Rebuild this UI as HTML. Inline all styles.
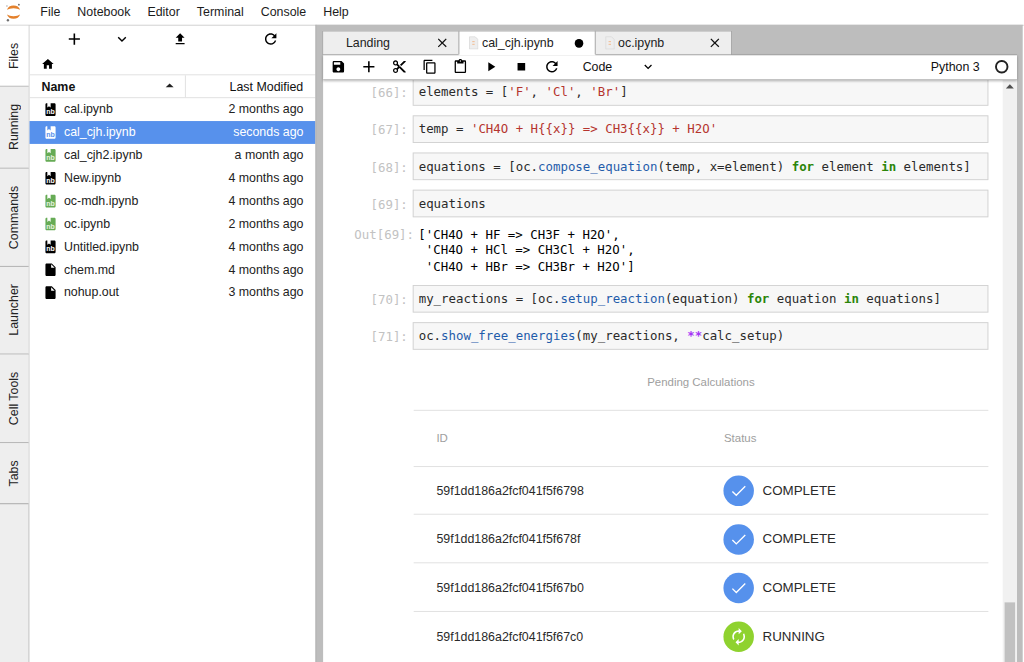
<!DOCTYPE html>
<html>
<head>
<meta charset="utf-8">
<title>JupyterLab</title>
<style>
*{box-sizing:border-box;margin:0;padding:0}
html,body{width:1024px;height:662px;overflow:hidden;background:#fff}
body{font-family:"Liberation Sans",Arial,sans-serif;font-size:13px;color:#000;position:relative}
#app{position:absolute;left:0;top:0;width:1074.4px;height:696px;transform:scale(0.953125);transform-origin:0 0;overflow:hidden;background:#fff}
.abs{position:absolute}
.ic{position:absolute;display:block}
#top{left:0;top:0;width:1075px;height:27px;background:#fff;border-bottom:1px solid #c4c4c4}
#menu{position:absolute;left:33.4px;top:0;height:25px;display:flex}
#menu div{padding:0 8.95px;line-height:26.8px;font-size:13px;color:#1c1c1c;white-space:nowrap}
#side{left:0;top:27px;width:30.7px;height:670px;background:#eee;border-right:1.2px solid #b0b0b0;display:flex;flex-direction:column}
.st{width:29.5px;border-bottom:1px solid #a8a8a8;background:#eee;display:flex;align-items:center;justify-content:center;padding:18px 0;flex:none}
.st.cur{background:#fff}
.st span{writing-mode:vertical-rl;transform:rotate(180deg);font-size:13px;color:#222;white-space:nowrap;line-height:16px}
#fb{left:30.7px;top:27px;width:299.9px;height:670px;background:#fff}
#fbh{position:absolute;left:0;top:51.2px;width:299.9px;height:25px;border-top:1px solid #e0e0e0;border-bottom:1px solid #e0e0e0;line-height:23px;color:#111}
#fbh b{position:absolute;left:12.9px;top:0}
#fbh .lm{position:absolute;right:12.4px;top:0}
#fbh .dv{position:absolute;left:162.9px;top:0;width:1px;height:23px;background:#e0e0e0}
.row{position:absolute;left:0;width:299.9px;height:24px;line-height:24px;font-size:13px;color:#222;white-space:nowrap}
.row .nm{position:absolute;left:36.4px;top:0.4px}
.row .md{position:absolute;right:12.2px;top:0.4px}
.row.sel{background:#5791ec;color:#fff}
#dock{left:330.6px;top:26.2px;width:742.6px;height:670px;background:#bdbdbd}
#handle{left:330.6px;top:26.2px;width:1.6px;height:670px;background:#b2b2b2}
.tab{position:absolute;top:32.3px;height:25.3px;width:143.8px;background:#eee;border:1px solid #a6a6a6;line-height:23px;font-size:13px;color:#222;white-space:nowrap}
.tab.cur{background:#fff;border-bottom-color:#fff;z-index:4}
.tab .lb{position:absolute;left:23.6px;top:-0.4px}
#tabline{left:338px;top:56.6px;width:729px;height:1px;background:#a6a6a6}
#nbtool{left:338.6px;top:57.6px;width:728.4px;height:26.3px;background:#fff;border-bottom:1px solid #bcbcbc;box-shadow:0 1px 2.5px rgba(0,0,0,.3);z-index:3}
#nb{left:338.6px;top:82.3px;width:728.4px;height:614px;background:#fff;overflow:hidden}
.mono{font-family:"DejaVu Sans Mono","Liberation Mono",monospace;font-size:13px}
.pr{position:absolute;left:0;width:89.3px;text-align:right;color:#c2c2c2;white-space:pre;line-height:17px}
.inb{position:absolute;left:94.7px;width:603.6px;height:29px;background:#f7f7f7;border:1px solid #d2d2d2;line-height:17px;padding:5px 0 0 5px;white-space:pre;color:#2a2a2a}
.outp{position:absolute;left:100.3px;white-space:pre;color:#000;line-height:16.8px}
.k{color:#2b8509;font-weight:bold}.s{color:#b5342e}.p{color:#1f5caa}.o{color:#a535f5;font-weight:bold}
.hl{position:absolute;left:95px;width:603.6px;height:1px;background:#e0e0e0}
.th{position:absolute;font-size:12px;color:#9e9e9e;white-space:nowrap;line-height:16px}
.td{position:absolute;left:119.3px;font-size:13px;color:#2a2a2a;white-space:nowrap;line-height:16px}
.av{position:absolute;left:420.9px;width:32px;height:32px;border-radius:50%}
.cl{position:absolute;left:461.5px;font-size:14px;color:#2a2a2a;white-space:nowrap;line-height:18px}
</style>
</head>
<body>
<div id="app">

<div id="top" class="abs">
<svg class="ic" style="left:5px;top:2.5px" width="19" height="20" viewBox="0 0 19 20"><path d="M2.3 7.3 A7.2 6.2 0 0 1 16.1 7.3 A8.6 4.3 0 0 0 2.3 7.3Z" fill="#e4812c"/><path d="M2.3 12.3 A7.2 6.2 0 0 0 16.1 12.3 A8.6 4.3 0 0 1 2.3 12.3Z" fill="#e4812c"/><circle cx="14.8" cy="1.9" r="1.0" fill="#6f6f70"/><circle cx="3.3" cy="18.3" r="1.25" fill="#6f6f70"/><circle cx="2.3" cy="3.3" r="0.7" fill="#989798"/></svg>
<div id="menu"><div>File</div><div>Notebook</div><div>Editor</div><div>Terminal</div><div>Console</div><div>Help</div></div>
</div>
<div id="side" class="abs">
<div class="st cur"><span>Files</span></div>
<div class="st"><span>Running</span></div>
<div class="st"><span>Commands</span></div>
<div class="st"><span>Launcher</span></div>
<div class="st"><span>Cell Tools</span></div>
<div class="st"><span>Tabs</span></div>
</div>
<div id="fb" class="abs">
<svg class="ic" style="left:37.10px;top:4.10px" width="20" height="20" viewBox="0 0 24 24"><path fill="#000" d="M19 13h-6v6h-2v-6H5v-2h6V5h2v6h6v2z"/></svg>
<svg class="ic" style="left:88.10px;top:5.10px" width="18" height="18" viewBox="0 0 24 24"><path fill="#000" d="M16.59 8.59L12 13.17 7.41 8.59 6 10l6 6 6-6z"/></svg>
<svg class="ic" style="left:149.90px;top:6.10px" width="16" height="16" viewBox="0 0 24 24"><path fill="#000" d="M9 16h6v-6h4l-7-7-7 7h4zm-4 2h14v2H5z"/></svg>
<svg class="ic" style="left:244.30px;top:5.00px" width="18" height="18" viewBox="0 0 24 24"><path fill="#000" d="M17.65 6.35C16.2 4.9 14.21 4 12 4c-4.42 0-7.99 3.58-7.99 8s3.57 8 7.99 8c3.73 0 6.84-2.55 7.73-6h-2.08c-.82 2.33-3.04 4-5.65 4-3.31 0-6-2.69-6-6s2.69-6 6-6c1.66 0 3.14.69 4.22 1.78L13 11h7V4l-2.35 2.35z"/></svg>
<svg class="ic" style="left:11.95px;top:33.15px" width="14.5" height="14.5" viewBox="0 0 24 24"><path fill="#000" d="M10 20v-6h4v6h5v-8h3L12 3 2 12h3v8z"/></svg>
<div id="fbh"><b>Name</b><span class="lm">Last Modified</span><span class="dv"></span><svg class="ic" style="left:137.60px;top:0.60px" width="20" height="20" viewBox="0 0 24 24"><path fill="#222" d="M7 14l5-5 5 5z"/></svg></div>
<div class="row" style="top:76.0px"><svg class="ic" style="left:14.10px;top:4.00px" width="16" height="16" viewBox="0 0 24 24"><path fill="#000" d="M6 2H7V8.7L9.6 6.6 12.2 8.7V2H18c1.1 0 2 .9 2 2v16c0 1.1-.9 2-2 2H6c-1.1 0-2-.9-2-2V4c0-1.1.9-2 2-2z"/><text x="12" y="19.3" text-anchor="middle" font-family="Liberation Sans,Arial,sans-serif" font-weight="bold" font-size="11" fill="#fff">nb</text></svg><span class="nm">cal.ipynb</span><span class="md">2 months ago</span></div>
<div class="row sel" style="top:100.0px"><svg class="ic" style="left:14.10px;top:4.00px" width="16" height="16" viewBox="0 0 24 24"><path fill="#fff" d="M6 2H7V8.7L9.6 6.6 12.2 8.7V2H18c1.1 0 2 .9 2 2v16c0 1.1-.9 2-2 2H6c-1.1 0-2-.9-2-2V4c0-1.1.9-2 2-2z"/><text x="12" y="19.3" text-anchor="middle" font-family="Liberation Sans,Arial,sans-serif" font-weight="bold" font-size="11" fill="#5791ec">nb</text></svg><span class="nm">cal_cjh.ipynb</span><span class="md">seconds ago</span></div>
<div class="row" style="top:124.0px"><svg class="ic" style="left:14.10px;top:4.00px" width="16" height="16" viewBox="0 0 24 24"><path fill="#66ab55" d="M6 2H7V8.7L9.6 6.6 12.2 8.7V2H18c1.1 0 2 .9 2 2v16c0 1.1-.9 2-2 2H6c-1.1 0-2-.9-2-2V4c0-1.1.9-2 2-2z"/><text x="12" y="19.3" text-anchor="middle" font-family="Liberation Sans,Arial,sans-serif" font-weight="bold" font-size="11" fill="#e6f3e0">nb</text></svg><span class="nm">cal_cjh2.ipynb</span><span class="md">a month ago</span></div>
<div class="row" style="top:148.0px"><svg class="ic" style="left:14.10px;top:4.00px" width="16" height="16" viewBox="0 0 24 24"><path fill="#000" d="M6 2H7V8.7L9.6 6.6 12.2 8.7V2H18c1.1 0 2 .9 2 2v16c0 1.1-.9 2-2 2H6c-1.1 0-2-.9-2-2V4c0-1.1.9-2 2-2z"/><text x="12" y="19.3" text-anchor="middle" font-family="Liberation Sans,Arial,sans-serif" font-weight="bold" font-size="11" fill="#fff">nb</text></svg><span class="nm">New.ipynb</span><span class="md">4 months ago</span></div>
<div class="row" style="top:172.0px"><svg class="ic" style="left:14.10px;top:4.00px" width="16" height="16" viewBox="0 0 24 24"><path fill="#66ab55" d="M6 2H7V8.7L9.6 6.6 12.2 8.7V2H18c1.1 0 2 .9 2 2v16c0 1.1-.9 2-2 2H6c-1.1 0-2-.9-2-2V4c0-1.1.9-2 2-2z"/><text x="12" y="19.3" text-anchor="middle" font-family="Liberation Sans,Arial,sans-serif" font-weight="bold" font-size="11" fill="#e6f3e0">nb</text></svg><span class="nm">oc-mdh.ipynb</span><span class="md">4 months ago</span></div>
<div class="row" style="top:196.0px"><svg class="ic" style="left:14.10px;top:4.00px" width="16" height="16" viewBox="0 0 24 24"><path fill="#66ab55" d="M6 2H7V8.7L9.6 6.6 12.2 8.7V2H18c1.1 0 2 .9 2 2v16c0 1.1-.9 2-2 2H6c-1.1 0-2-.9-2-2V4c0-1.1.9-2 2-2z"/><text x="12" y="19.3" text-anchor="middle" font-family="Liberation Sans,Arial,sans-serif" font-weight="bold" font-size="11" fill="#e6f3e0">nb</text></svg><span class="nm">oc.ipynb</span><span class="md">2 months ago</span></div>
<div class="row" style="top:220.0px"><svg class="ic" style="left:14.10px;top:4.00px" width="16" height="16" viewBox="0 0 24 24"><path fill="#000" d="M6 2H7V8.7L9.6 6.6 12.2 8.7V2H18c1.1 0 2 .9 2 2v16c0 1.1-.9 2-2 2H6c-1.1 0-2-.9-2-2V4c0-1.1.9-2 2-2z"/><text x="12" y="19.3" text-anchor="middle" font-family="Liberation Sans,Arial,sans-serif" font-weight="bold" font-size="11" fill="#fff">nb</text></svg><span class="nm">Untitled.ipynb</span><span class="md">4 months ago</span></div>
<div class="row" style="top:244.0px"><svg class="ic" style="left:14.10px;top:4.00px" width="16" height="16" viewBox="0 0 24 24"><path fill="#000" d="M6 2c-1.1 0-1.99.9-1.99 2L4 20c0 1.1.89 2 1.99 2H18c1.1 0 2-.9 2-2V8l-6-6H6zm7 7V3.5L18.5 9H13z"/></svg><span class="nm">chem.md</span><span class="md">4 months ago</span></div>
<div class="row" style="top:268.0px"><svg class="ic" style="left:14.10px;top:4.00px" width="16" height="16" viewBox="0 0 24 24"><path fill="#000" d="M6 2c-1.1 0-1.99.9-1.99 2L4 20c0 1.1.89 2 1.99 2H18c1.1 0 2-.9 2-2V8l-6-6H6zm7 7V3.5L18.5 9H13z"/></svg><span class="nm">nohup.out</span><span class="md">3 months ago</span></div>
</div>
<div id="dock" class="abs"></div><div id="handle" class="abs"></div>
<div id="tabline" class="abs"></div>
<div class="tab" style="left:338.3px"><span class="lb">Landing</span><svg class="ic" style="left:117.20px;top:3.90px" width="16" height="16" viewBox="0 0 24 24"><path fill="#111" d="M19 6.41L17.59 5 12 10.59 6.41 5 5 6.41 10.59 12 5 17.59 6.41 19 12 13.41 17.59 19 19 17.41 13.41 12z"/></svg></div>
<div class="tab cur" style="left:481.1px"><svg class="ic" style="left:9.8px;top:4.8px" width="10" height="14" viewBox="0 0 10 14"><path d="M0.5 0.5h6l3 3v10h-9z" fill="#eeeeee" stroke="#d6d6d6" stroke-width="0.8"/><path d="M3.5 5.7h2.5M3.5 8.5h2.5" stroke="#f3b27f" stroke-width="0.9"/></svg><span class="lb">cal_cjh.ipynb</span><span style="position:absolute;left:121.2px;top:7.6px;width:8.7px;height:8.7px;border-radius:50%;background:#000"></span></div>
<div class="tab" style="left:623.9px"><svg class="ic" style="left:9.8px;top:4.8px" width="10" height="14" viewBox="0 0 10 14"><path d="M0.5 0.5h6l3 3v10h-9z" fill="#eeeeee" stroke="#d6d6d6" stroke-width="0.8"/><path d="M3.5 5.7h2.5M3.5 8.5h2.5" stroke="#f3b27f" stroke-width="0.9"/></svg><span class="lb">oc.ipynb</span><svg class="ic" style="left:117.20px;top:3.90px" width="16" height="16" viewBox="0 0 24 24"><path fill="#111" d="M19 6.41L17.59 5 12 10.59 6.41 5 5 6.41 10.59 12 5 17.59 6.41 19 12 13.41 17.59 19 19 17.41 13.41 12z"/></svg></div>
<div id="nbtool" class="abs">
<svg class="ic" style="left:8.30px;top:4.70px" width="16" height="16" viewBox="0 0 24 24"><path fill="#000" d="M17 3H5c-1.11 0-2 .9-2 2v14c0 1.1.89 2 2 2h14c1.1 0 2-.9 2-2V7l-4-4zm-5 16c-1.66 0-3-1.34-3-3s1.34-3 3-3 3 1.34 3 3-1.34 3-3 3zm3-10H5V5h10v4z"/></svg>
<svg class="ic" style="left:38.35px;top:2.70px" width="20" height="20" viewBox="0 0 24 24"><path fill="#000" d="M19 13h-6v6h-2v-6H5v-2h6V5h2v6h6v2z"/></svg>
<svg class="ic" style="left:72.40px;top:4.70px" width="16" height="16" viewBox="0 0 24 24"><path fill="#000" d="M9.64 7.64c.23-.5.36-1.05.36-1.64 0-2.21-1.79-4-4-4S2 3.79 2 6s1.79 4 4 4c.59 0 1.14-.13 1.64-.36L10 12l-2.36 2.36C7.14 14.13 6.59 14 6 14c-2.21 0-4 1.79-4 4s1.79 4 4 4 4-1.79 4-4c0-.59-.13-1.14-.36-1.64L12 14l7 7h3v-1L9.64 7.64zM6 8c-1.1 0-2-.89-2-2s.9-2 2-2 2 .89 2 2-.9 2-2 2zm0 12c-1.1 0-2-.89-2-2s.9-2 2-2 2 .89 2 2-.9 2-2 2zm6-7.5c-.28 0-.5-.22-.5-.5s.22-.5.5-.5.5.22.5.5-.22.5-.5.5zM19 3l-6 6 2 2 7-7V3z"/></svg>
<svg class="ic" style="left:104.45px;top:4.70px" width="16" height="16" viewBox="0 0 24 24"><path fill="#000" d="M16 1H4c-1.1 0-2 .9-2 2v14h2V3h12V1zm3 4H8c-1.1 0-2 .9-2 2v14c0 1.1.9 2 2 2h11c1.1 0 2-.9 2-2V7c0-1.1-.9-2-2-2zm0 16H8V7h11v14z"/></svg>
<svg class="ic" style="left:136.50px;top:4.70px" width="16" height="16" viewBox="0 0 24 24"><path fill="#000" d="M19 2h-4.18C14.4.84 13.3 0 12 0c-1.3 0-2.4.84-2.82 2H5c-1.1 0-2 .9-2 2v16c0 1.1.9 2 2 2h14c1.1 0 2-.9 2-2V4c0-1.1-.9-2-2-2zm-7 0c.55 0 1 .45 1 1s-.45 1-1 1-1-.45-1-1 .45-1 1-1zm7 18H5V4h2v3h10V4h2v16z"/></svg>
<svg class="ic" style="left:168.55px;top:4.70px" width="16" height="16" viewBox="0 0 24 24"><path fill="#000" d="M8 5v14l11-7z"/></svg>
<svg class="ic" style="left:200.60px;top:4.70px" width="16" height="16" viewBox="0 0 24 24"><path fill="#000" d="M6 6h12v12H6z"/></svg>
<svg class="ic" style="left:231.65px;top:3.70px" width="18" height="18" viewBox="0 0 24 24"><path fill="#000" d="M17.65 6.35C16.2 4.9 14.21 4 12 4c-4.42 0-7.99 3.58-7.99 8s3.57 8 7.99 8c3.73 0 6.84-2.55 7.73-6h-2.08c-.82 2.33-3.04 4-5.65 4-3.31 0-6-2.69-6-6s2.69-6 6-6c1.66 0 3.14.69 4.22 1.78L13 11h7V4l-2.35 2.35z"/></svg>
<span style="position:absolute;left:272.7px;top:0;line-height:26.6px;font-size:13px;color:#111">Code</span>
<svg class="ic" style="left:333.00px;top:4.60px" width="16" height="16" viewBox="0 0 24 24"><path fill="#000" d="M16.59 8.59L12 13.17 7.41 8.59 6 10l6 6 6-6z"/></svg>
<span style="position:absolute;right:39.1px;top:0;line-height:26.6px;font-size:13px;color:#111">Python 3</span>
<span style="position:absolute;left:705.9px;top:5.9px;width:13.6px;height:13.6px;border-radius:50%;border:2px solid #222"></span>
</div>
<div id="nb" class="abs mono">
<div class="pr" style="top:6.9px">[66]:</div><div class="inb" style="top:0.0px">elements = [<span class=s>'F'</span>, <span class=s>'Cl'</span>, <span class=s>'Br'</span>]</div>
<div class="pr" style="top:45.9px">[67]:</div><div class="inb" style="top:39.0px">temp = <span class=s>'CH4O + H{{x}} =&gt; CH3{{x}} + H2O'</span></div>
<div class="pr" style="top:84.9px">[68]:</div><div class="inb" style="top:78.0px">equations = [oc.<span class=p>compose_equation</span>(temp, x=element) <span class=k>for</span> element <span class=k>in</span> elements]</div>
<div class="pr" style="top:123.9px">[69]:</div><div class="inb" style="top:117.0px">equations</div>
<div class="pr" style="top:156.4px;line-height:16.8px;width:95.8px">Out[69]:</div>
<div class="outp" style="top:156.4px">['CH4O + HF =&gt; CH3F + H2O',
 'CH4O + HCl =&gt; CH3Cl + H2O',
 'CH4O + HBr =&gt; CH3Br + H2O']</div>
<div class="pr" style="top:224.1px">[70]:</div><div class="inb" style="top:217.2px">my_reactions = [oc.<span class=p>setup_reaction</span>(equation) <span class=k>for</span> equation <span class=k>in</span> equations]</div>
<div class="pr" style="top:263.1px">[71]:</div><div class="inb" style="top:256.2px">oc.<span class=p>show_free_energies</span>(my_reactions, <span class=o>**</span>calc_setup)</div>
</div>
<div class="abs" style="left:338.6px;top:82.3px;width:713.4px;height:614px;overflow:hidden">
<div class="th" style="left:0;width:793.6px;text-align:center;top:310.3px">Pending Calculations</div>
<div class="hl" style="top:347.6px"></div>
<div class="hl" style="top:406.5px"></div>
<div class="hl" style="top:457.1px"></div>
<div class="hl" style="top:508.1px"></div>
<div class="hl" style="top:559.0px"></div>
<div class="th" style="left:119.3px;top:369.6px">ID</div>
<div class="th" style="left:421px;top:369.6px">Status</div>
<div class="td" style="top:424.9px">59f1dd186a2fcf041f5f6798</div>
<div class="av" style="top:416.8px;background:#5691ec"><svg class="ic" style="left:6px;top:6px" width="20" height="20" viewBox="0 0 24 24"><path d="M4.1 12.7L9 17.6 20.3 6.3" fill="none" stroke="#fff" stroke-width="1.7"/></svg></div>
<div class="cl" style="top:423.1px">COMPLETE</div>
<div class="td" style="top:475.9px">59f1dd186a2fcf041f5f678f</div>
<div class="av" style="top:467.8px;background:#5691ec"><svg class="ic" style="left:6px;top:6px" width="20" height="20" viewBox="0 0 24 24"><path d="M4.1 12.7L9 17.6 20.3 6.3" fill="none" stroke="#fff" stroke-width="1.7"/></svg></div>
<div class="cl" style="top:474.1px">COMPLETE</div>
<div class="td" style="top:526.8px">59f1dd186a2fcf041f5f67b0</div>
<div class="av" style="top:518.7px;background:#5691ec"><svg class="ic" style="left:6px;top:6px" width="20" height="20" viewBox="0 0 24 24"><path d="M4.1 12.7L9 17.6 20.3 6.3" fill="none" stroke="#fff" stroke-width="1.7"/></svg></div>
<div class="cl" style="top:525.0px">COMPLETE</div>
<div class="td" style="top:577.8px">59f1dd186a2fcf041f5f67c0</div>
<div class="av" style="top:569.7px;background:#8fd22f"><svg class="ic" style="left:6.00px;top:6.00px" width="20" height="20" viewBox="0 0 24 24"><path fill="#fff" d="M12 6v3l4-4-4-4v3c-4.42 0-8 3.58-8 8 0 1.57.46 3.03 1.24 4.26L6.7 14.8c-.45-.83-.7-1.79-.7-2.8 0-3.31 2.69-6 6-6zm6.76 1.74L17.3 9.2c.44.84.7 1.79.7 2.8 0 3.31-2.69 6-6 6v-3l-4 4 4 4v-3c4.42 0 8-3.58 8-8 0-1.57-.46-3.03-1.24-4.26z"/></svg></div>
<div class="cl" style="top:576.0px">RUNNING</div>
</div>
<div class="abs" style="left:1052px;top:82.3px;width:15px;height:614px;background:#f1f1f1;z-index:2"></div>
<svg class="ic" style="left:1052px;top:82.3px;z-index:2" width="15" height="15" viewBox="0 0 15 15"><path d="M3.3 10.9L7.5 6.3l4.2 4.6z" fill="#505050"/></svg>
<div class="abs" style="left:1054px;top:631.6px;width:11px;height:70px;background:#c1c1c1;z-index:2"></div>
</div>
</body>
</html>
